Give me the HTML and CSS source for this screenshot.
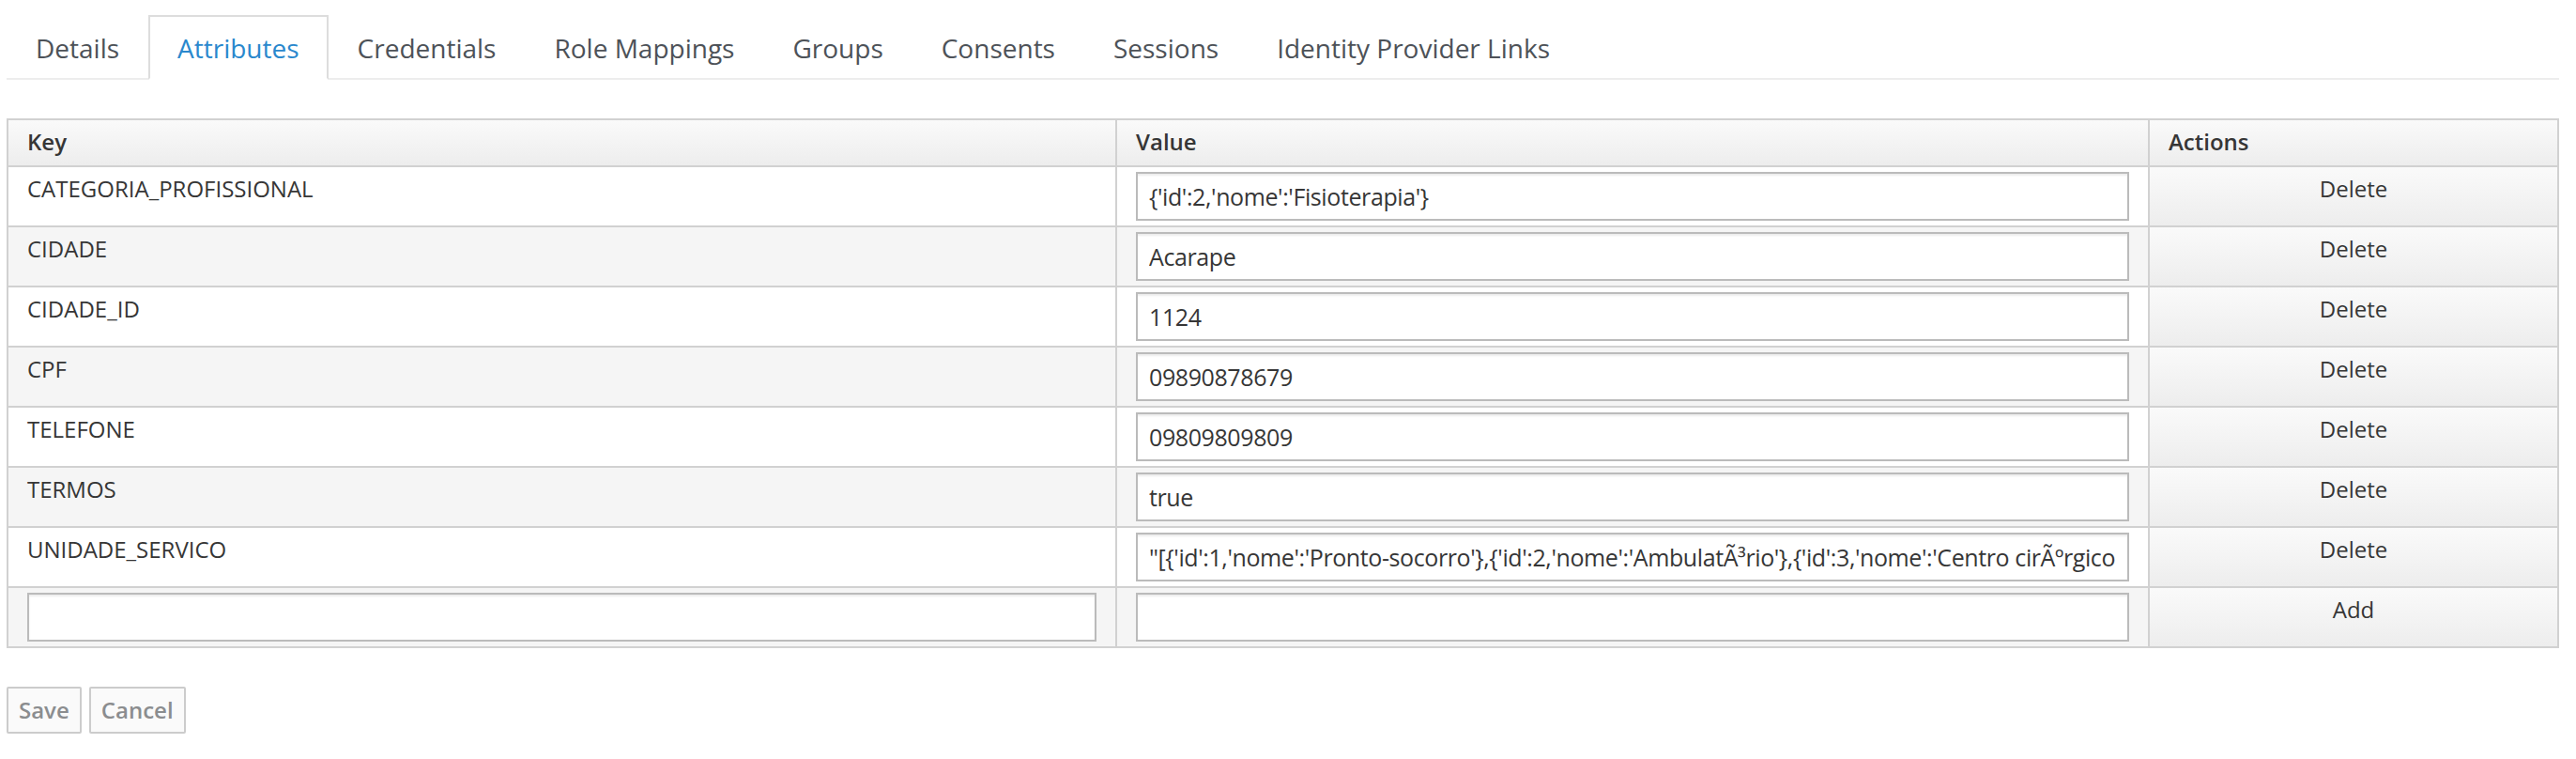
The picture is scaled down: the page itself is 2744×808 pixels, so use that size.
FILE: index.html
```html
<!DOCTYPE html>
<html lang="en">
<head>
<meta charset="utf-8">
<title>Attributes</title>
<link rel="stylesheet" href="styles.css">
</head>
<body>
<div class="page">
  <ul class="tabs">
    <li class="tab"><a>Details</a></li>
    <li class="tab active"><a>Attributes</a></li>
    <li class="tab"><a>Credentials</a></li>
    <li class="tab"><a>Role Mappings</a></li>
    <li class="tab"><a>Groups</a></li>
    <li class="tab"><a>Consents</a></li>
    <li class="tab"><a>Sessions</a></li>
    <li class="tab"><a>Identity Provider Links</a></li>
  </ul>

  <table class="attr-table">
    <thead>
      <tr>
        <th class="col-key">Key</th>
        <th class="col-value">Value</th>
        <th class="col-actions">Actions</th>
      </tr>
    </thead>
    <tbody>
      <tr>
        <td>CATEGORIA_PROFISSIONAL</td>
        <td><input class="field" type="text" value="{'id':2,'nome':'Fisioterapia'}"></td>
        <td class="action">Delete</td>
      </tr>
      <tr>
        <td>CIDADE</td>
        <td><input class="field" type="text" value="Acarape"></td>
        <td class="action">Delete</td>
      </tr>
      <tr>
        <td>CIDADE_ID</td>
        <td><input class="field" type="text" value="1124"></td>
        <td class="action">Delete</td>
      </tr>
      <tr>
        <td>CPF</td>
        <td><input class="field" type="text" value="09890878679"></td>
        <td class="action">Delete</td>
      </tr>
      <tr>
        <td>TELEFONE</td>
        <td><input class="field" type="text" value="09809809809"></td>
        <td class="action">Delete</td>
      </tr>
      <tr>
        <td>TERMOS</td>
        <td><input class="field" type="text" value="true"></td>
        <td class="action">Delete</td>
      </tr>
      <tr>
        <td>UNIDADE_SERVICO</td>
        <td><input class="field" type="text" value="&quot;[{'id':1,'nome':'Pronto-socorro'},{'id':2,'nome':'AmbulatÃ³rio'},{'id':3,'nome':'Centro cirÃºrgico'},{'id':4,'nome':'UTI'}]&quot;"></td>
        <td class="action">Delete</td>
      </tr>
      <tr>
        <td><input class="field" type="text" value=""></td>
        <td><input class="field" type="text" value=""></td>
        <td class="action">Add</td>
      </tr>
    </tbody>
  </table>

  <div class="form-actions">
    <button class="btn" disabled>Save</button>
    <button class="btn" disabled>Cancel</button>
  </div>
</div>
</body>
</html>
```

FILE: styles.css
```css
html, body {
  margin: 0;
  padding: 0;
  background: #ffffff;
}

body {
  font-family: "Open Sans", "Liberation Sans", sans-serif;
  color: #363636;
}

.page {
  padding: 16px 18px 0 7px;
}

/* ---------- Tabs ---------- */
.tabs {
  list-style: none;
  margin: 0;
  padding: 0;
  display: flex;
  border-bottom: 2px solid #ededed;
}

.tab {
  margin-bottom: -2px;
}

.tab a {
  display: block;
  padding: 13px 29px 12px;
  font-size: 28px;
  line-height: 40px;
  color: #4d5258;
  border: 2px solid transparent;
  cursor: pointer;
}

.tab.active a {
  color: #2a88cd;
  background: #ffffff;
  border-color: #dddddd;
  border-bottom-color: #ffffff;
}

/* ---------- Table ---------- */
.attr-table {
  margin-top: 41px;
  width: 100%;
  table-layout: fixed;
  border-collapse: separate;
  border-spacing: 0;
  border-top: 2px solid #d1d1d1;
  border-left: 2px solid #d1d1d1;
  font-size: 24px;
}

.attr-table th,
.attr-table td {
  box-sizing: border-box;
  border-right: 2px solid #d1d1d1;
  border-bottom: 2px solid #d1d1d1;
  text-align: left;
  vertical-align: top;
}

.attr-table th {
  padding: 3px 20px 5px;
  line-height: 40px;
  font-weight: 600;
  color: #363636;
  background-image: linear-gradient(to bottom, #fafafa 0%, #ededed 100%);
}

.col-key {
  width: 1181px;
}

.col-value {
  width: 1100px;
}

.attr-table td {
  padding: 5px 20px;
  line-height: 36px;
  height: 64px;
}

.attr-table tbody tr:nth-child(odd) td {
  background: #ffffff;
}

.attr-table tbody tr:nth-child(even) td {
  background: #f5f5f5;
}

.attr-table tbody tr td.action {
  text-align: center;
  cursor: pointer;
  background-color: #f3f3f3;
  background-image: linear-gradient(to bottom, #fafafa 0%, #ededed 100%);
}

.field {
  display: block;
  box-sizing: border-box;
  width: 100%;
  height: 52px;
  margin: 0;
  padding: 0 12px;
  font-family: "Open Sans", "Liberation Sans", sans-serif;
  font-size: 25px;
  letter-spacing: -0.4px;
  color: #363636;
  background: #ffffff;
  border: 2px solid #bbbbbb;
  border-radius: 0;
  box-shadow: inset 0 2px 2px rgba(3, 3, 3, 0.075);
  outline: none;
}

/* ---------- Buttons ---------- */
.form-actions {
  margin-top: 41px;
  display: flex;
  gap: 8px;
}

.btn {
  box-sizing: border-box;
  height: 50px;
  padding: 0 11px;
  font-family: "Open Sans", "Liberation Sans", sans-serif;
  font-size: 24px;
  font-weight: 600;
  line-height: 46px;
  color: #8b8d8f;
  background: #fafafa;
  border: 2px solid #cccccc;
  border-radius: 2px;
}
```
